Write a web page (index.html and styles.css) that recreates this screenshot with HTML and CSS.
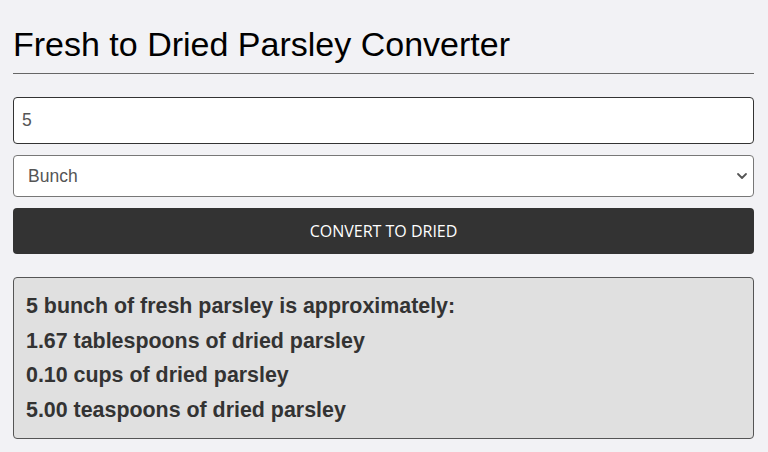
FILE: index.html
```html
<!DOCTYPE html>
<html lang="en">
<head>
<meta charset="utf-8">
<title>Fresh to Dried Parsley Converter</title>
<link rel="stylesheet" href="styles.css">
</head>
<body>
<div class="container">
  <h1 class="title">Fresh to Dried Parsley Converter</h1>
  <div class="form">
    <input class="field field-input" type="text" value="5">
    <div class="select-wrap">
      <select class="field field-select">
        <option>Bunch</option>
      </select>
      <svg class="chev" width="12" height="8" viewBox="0 0 12 8"><path d="M2 2 L6 6 L10 2" fill="none" stroke="#555" stroke-width="1.8" stroke-linecap="round" stroke-linejoin="round"/></svg>
    </div>
    <button class="btn">CONVERT TO DRIED</button>
  </div>
  <div class="result">
    <p>5 bunch of fresh parsley is approximately:</p>
    <p>1.67 tablespoons of dried parsley</p>
    <p>0.10 cups of dried parsley</p>
    <p>5.00 teaspoons of dried parsley</p>
  </div>
</div>
</body>
</html>
```
FILE: styles.css
```css
* { box-sizing: border-box; }
html, body {
  margin: 0;
  padding: 0;
  background: #f2f2f5;
}
body {
  font-family: "Liberation Sans", Arial, sans-serif;
  color: #000;
}
.container {
  padding: 0 14px 0 13px;
}
.title {
  margin: 0;
  padding-top: 26px;
  padding-bottom: 10px;
  font-size: 34px;
  font-weight: normal;
  line-height: 37px;
  border-bottom: 1px solid #666;
}
.form {
  display: flex;
  flex-direction: column;
  gap: 11px;
  margin-top: 23px;
}
.field {
  width: 100%;
  font-family: "Liberation Sans", Arial, sans-serif;
  font-size: 17.5px;
  color: #555;
  background: #fff;
  border: 1px solid #333;
  border-radius: 4px;
  outline: none;
}
.field-input {
  height: 47px;
  padding: 0 8px;
}
.select-wrap {
  position: relative;
}
.field-select {
  height: 42px;
  padding: 0 14px;
  appearance: none;
  -webkit-appearance: none;
  border-color: #777;
  display: block;
}
.chev {
  position: absolute;
  right: 6px;
  top: 17px;
}
.btn {
  height: 46px;
  width: 100%;
  background: #333;
  color: #fff;
  border: none;
  border-radius: 4px;
  font-family: "Open Sans", sans-serif;
  font-size: 16px;
  cursor: pointer;
}
.result {
  margin-top: 23px;
  background: #e0e0e0;
  border: 1px solid #555;
  border-radius: 4px;
  padding: 11px 12px 11px;
  display: flex;
  flex-direction: column;
}
.result p {
  margin: 0;
  font-size: 21.4px;
  font-weight: bold;
  color: #333;
  line-height: 34.5px;
}
```
